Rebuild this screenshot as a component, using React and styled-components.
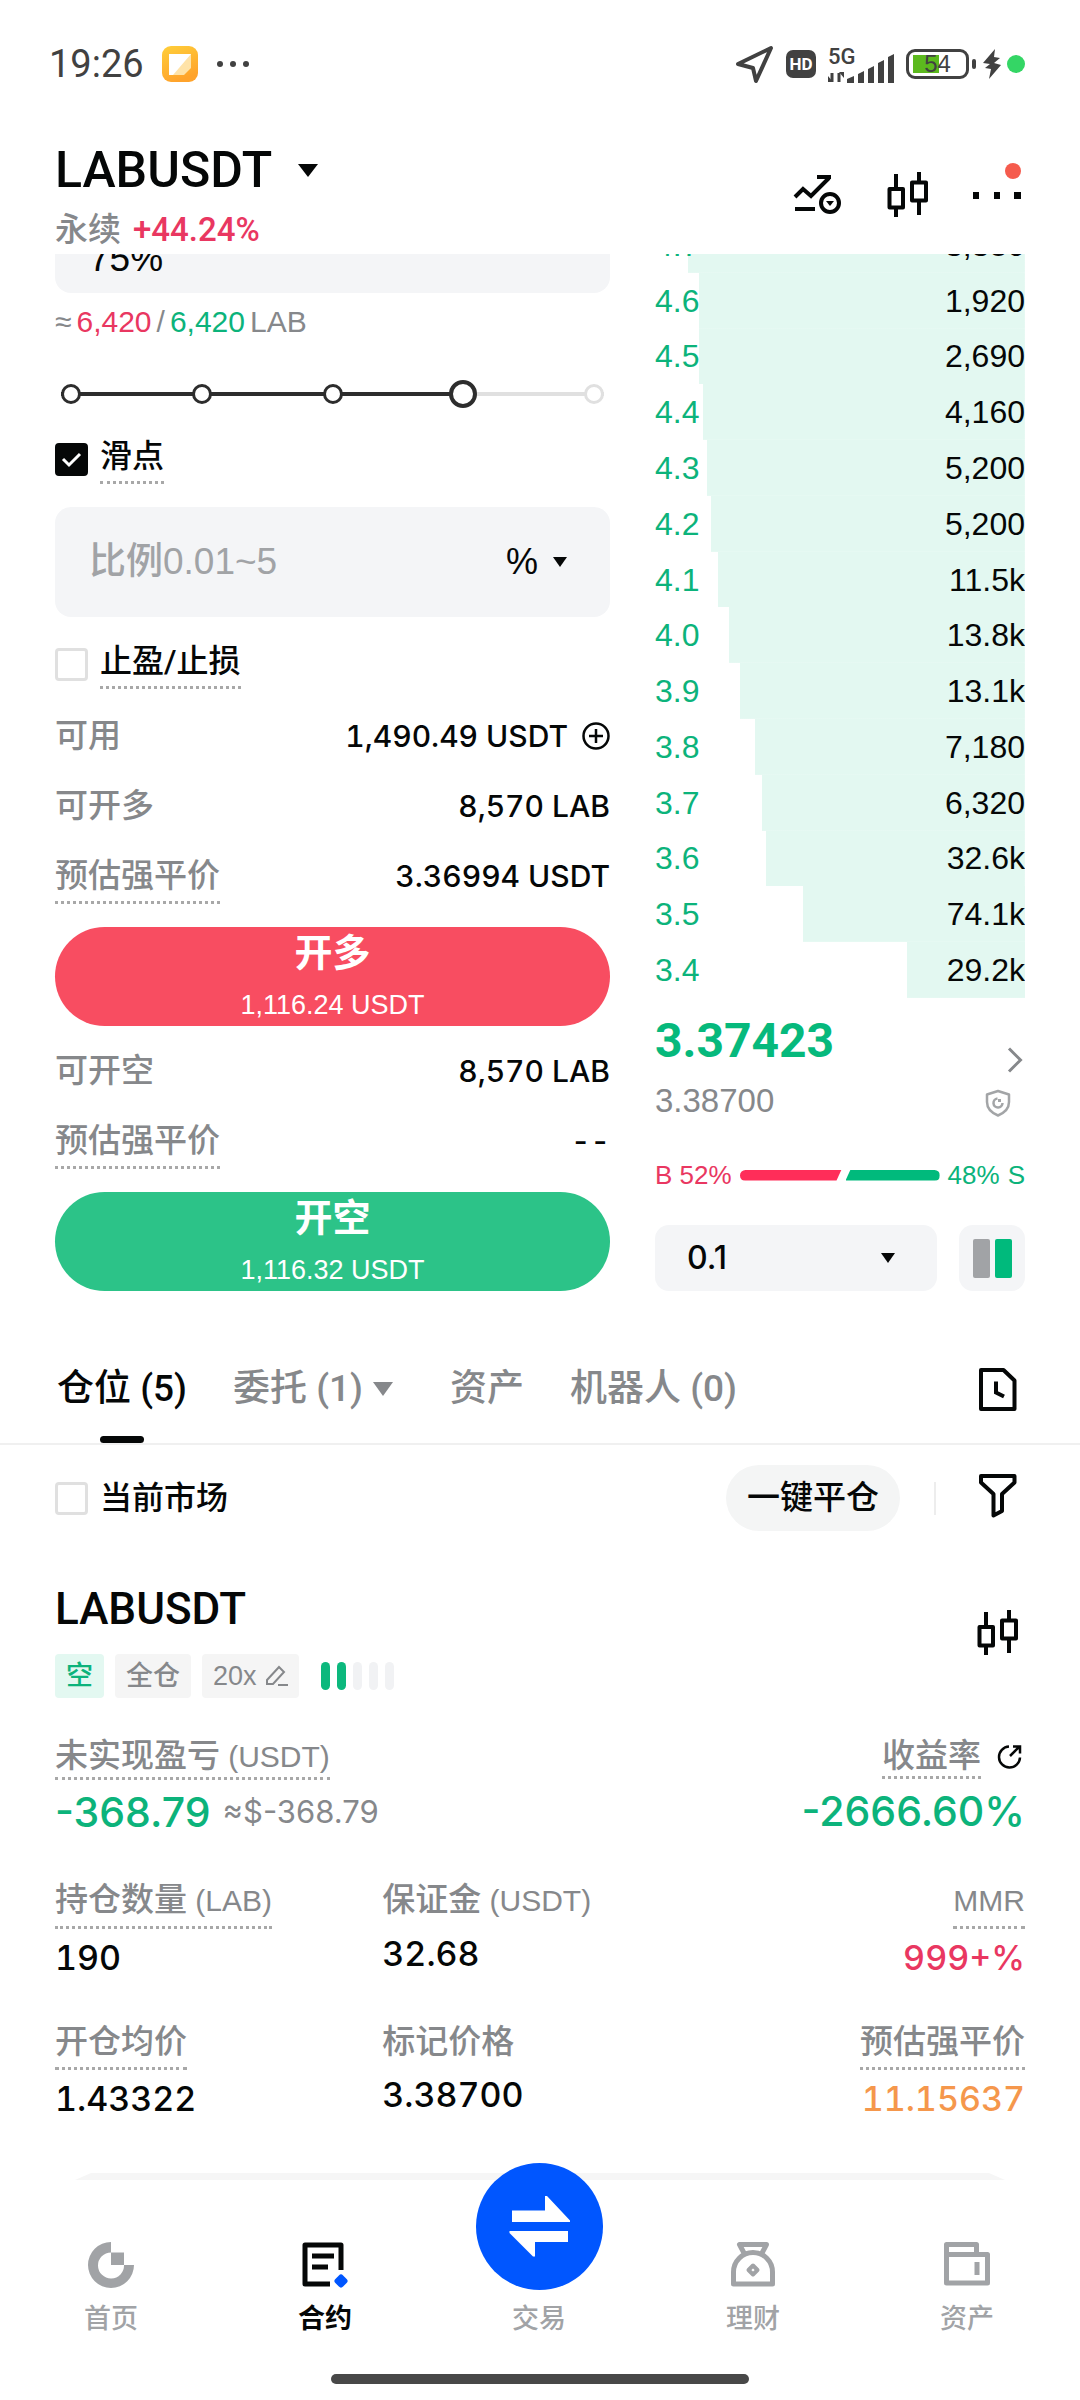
import React, { useState } from 'react'
import styled, { createGlobalStyle, css } from 'styled-components'

const color = {
  ink: '#050707',
  grey: '#86888b',
  mute: '#a1a3a6',
  green: '#0cb37b',
  greenSolid: '#2cc388',
  greenTint: '#e3f8f1',
  pink: '#e93761',
  red: '#f84d61',
  orange: '#f5974c',
  field: '#f4f5f7',
  blue: '#0056ff',
  status: '#414141'
}

const regular = '"Liberation Sans", "Noto Sans CJK SC", sans-serif'
const medium = 'Roboto, "Noto Sans CJK SC", sans-serif'
const figures = 'Inter, "Noto Sans CJK SC", sans-serif'

const GlobalStyle = createGlobalStyle`
  *, *::before, *::after {
    box-sizing: border-box;
  }

  body {
    margin: 0;
    background: #fff;
    color: ${color.ink};
    font-family: ${regular};
    font-size: 32px;
  }

  button, input, select {
    margin: 0;
    padding: 0;
    border: 0;
    background: none;
    color: inherit;
    font: inherit;
  }

  svg {
    display: block;
    flex: none;
  }
`

const Page = styled.div`
  display: flex;
  flex-direction: column;
`

/* status bar */

const StatusBar = styled.div`
  display: flex;
  justify-content: space-between;
  align-items: center;
  height: 128px;
  padding: 0 55px 0 49px;
  color: ${color.status};
`

const StatusGroup = styled.div`
  display: flex;
  align-items: center;
  gap: ${props => props.$gap}px;
`

const Clock = styled.span`
  font-family: ${medium};
  font-size: 38px;
  line-height: 44px;
`

const HdBadge = styled.span`
  width: 30px;
  border-radius: 7px;
  background: ${color.status};
  color: #fff;
  font: 700 17px/28px ${medium};
  text-align: center;
`

const Battery = styled.span`
  width: 63px;
  height: 30px;
  border: 3px solid ${color.status};
  border-radius: 9px;
  background: linear-gradient(#5cb91e, #5cb91e) 4px center / 26px 18px no-repeat;
  font: 400 24px/24px ${regular};
  text-align: center;
`

const Power = styled.span`
  display: flex;
  align-items: center;
  gap: 3px;
`

const Charging = styled.span`
  display: flex;
  align-items: center;
  gap: 6px;
  margin-left: 4px;
`

const OnlineDot = styled.span`
  width: 18px;
  height: 18px;
  border-radius: 50%;
  background: #34d665;
`

/* pair header */

const Header = styled.header`
  display: flex;
  justify-content: space-between;
  align-items: center;
  padding: 12px 59px 4px 55px;
`

const PairButton = styled.button`
  display: flex;
  align-items: center;
  gap: 26px;
  font: 500 50px/60px ${medium};
`

const PairMeta = styled.p`
  display: flex;
  gap: 12px;
  margin: 10px 0 0;
  font: 500 33px/40px ${medium};
  color: ${color.grey};
`

const HeaderIcons = styled.div`
  display: flex;
  align-items: center;
  gap: 43px;
`

const IconButton = styled.button`
  position: relative;
  display: flex;
  padding-bottom: ${props => props.$lift || 0}px;
`

const NoticeDot = styled.span`
  position: absolute;
  right: 0;
  bottom: 20px;
  width: 16px;
  height: 16px;
  border-radius: 50%;
  background: #f55b4d;
`

/* trading area */

const Trade = styled.main`
  display: grid;
  grid-template-columns: minmax(0, 3fr) minmax(0, 2fr);
  gap: 45px;
  padding: 0 55px;
`

const Form = styled.form`
  display: flex;
  flex-direction: column;
`

/* lower part of a field that is scrolled under the header */
const ScrolledField = styled.div`
  display: flex;
  flex-direction: column;
  justify-content: flex-end;
  height: 39px;
  overflow: hidden;

  input {
    flex: none;
    width: 100%;
    height: 110px;
    padding: 42px 34px 0;
    border-radius: 16px;
    background: ${color.field};
    font-size: 37px;
    line-height: 44px;
  }
`

const Estimate = styled.p`
  display: flex;
  gap: 5px;
  margin: 9px 0 36px;
  font-size: 30px;
  line-height: 40px;
  color: ${color.grey};
`

const Tint = styled.span`
  color: ${props => props.$color};
`

const Slider = styled.div`
  position: relative;
  display: flex;
  justify-content: space-between;
  align-items: center;
  height: 32px;
  margin: 0 6px;
  background:
    linear-gradient(#2d2d2d, #2d2d2d) left center / 75% 4px no-repeat,
    linear-gradient(#e0e0e0, #e0e0e0) center / 100% 4px no-repeat;

  input {
    position: absolute;
    inset: 0;
    width: 100%;
    opacity: 0;
  }
`

const Mark = styled.span`
  width: 20px;
  height: 20px;
  border: 3px solid ${props => (props.$reached ? '#2d2d2d' : '#e0e0e0')};
  border-radius: 50%;
  background: #fff;

  ${props => props.$current && css`
    width: 28px;
    height: 28px;
    margin: 0 -4px;
    border-width: 4px;
  `}
`

const CheckRow = styled.label`
  display: flex;
  align-items: center;
  gap: 12px;
  margin-top: ${props => props.$top || 0}px;
  font: 500 32px/44px ${medium};

  input {
    appearance: none;
    width: 33px;
    height: 33px;
    border: 3px solid #e0e0e0;
    border-radius: 4px;
    background: #fff;
  }

  input:checked {
    border-color: ${color.ink};
    background: ${color.ink} url("data:image/svg+xml,%3Csvg xmlns='http://www.w3.org/2000/svg' viewBox='0 0 27 27'%3E%3Cpath d='M5 13l6 6L22 8' fill='none' stroke='white' stroke-width='3'/%3E%3C/svg%3E") center / 27px no-repeat;
  }
`

const Dotted = styled.span`
  padding-bottom: 3px;
  border-bottom: 3px dotted #a8a8a8;
`

const Field = styled.div`
  display: flex;
  align-items: center;
  height: 110px;
  margin-top: 23px;
  padding: 0 43px 0 34px;
  border-radius: 16px;
  background: ${color.field};

  input {
    flex: 1;
    min-width: 0;
    font-size: 37px;
    line-height: 50px;
  }

  input::placeholder {
    color: ${color.mute};
    font-weight: 500;
  }
`

const Picker = styled.select`
  flex: ${props => (props.$fill ? 1 : 'none')};
  appearance: none;
  margin-right: 14px;
  font: 500 ${props => (props.$fill ? 32 : 36)}px/44px ${props => (props.$fill ? figures : regular)};
`

const InfoList = styled.dl`
  margin: ${props => props.$top}px 0 16px;
`

const InfoRow = styled.div`
  display: flex;
  justify-content: space-between;
  align-items: center;
  height: 70px;

  dt {
    font: 500 33px/44px ${medium};
    color: ${color.grey};
  }

  dt > span {
    display: block;
    padding-top: 6px;
  }

  dd {
    display: flex;
    align-items: center;
    gap: 14px;
    margin: 0;
    font: 500 30px/44px ${figures};
    font-variant-numeric: tabular-nums;
  }
`

const OrderButton = styled.button`
  display: flex;
  flex-direction: column;
  align-items: center;
  justify-content: center;
  gap: 12px;
  height: 99px;
  border-radius: 50px;
  background: ${props => props.$color};
  color: #fff;

  strong {
    font: 700 38px/44px ${medium};
  }

  small {
    font: 400 27px/36px ${regular};
  }
`

/* order book */

const Book = styled.section`
  display: flex;
  flex-direction: column;
  min-width: 0;
`

const BookRows = styled.div`
  display: flex;
  flex: 1 1 0px;
  flex-direction: column;
  justify-content: flex-end;
  min-height: 0;
  overflow: hidden;
`

const BookTable = styled.table`
  flex: none;
  width: 100%;
  height: 781px;
  border-collapse: collapse;
  font-size: 32px;
  line-height: 36px;

  td {
    padding: 0;
  }

  td:first-child {
    color: ${color.green};
  }

  td:last-child {
    text-align: right;
  }
`

const DepthRow = styled.tr`
  background: linear-gradient(${color.greenTint}, ${color.greenTint}) right / 0 100% no-repeat;
`

const PriceBlock = styled.div`
  display: flex;
  justify-content: space-between;
  align-items: center;
  margin-top: 13px;
`

const LastPrice = styled.div`
  font: 700 48px/60px ${medium};
  color: #06b97c;
`

const MarkPrice = styled.div`
  margin-top: 10px;
  font-size: 33px;
  line-height: 40px;
  color: ${color.grey};
`

const PriceIcons = styled.div`
  display: flex;
  flex-direction: column;
  align-items: center;
  gap: 16px;
  padding-top: 32px;

  svg:first-child {
    align-self: flex-end;
  }

  svg:last-child {
    margin-right: 14px;
  }
`

const Ratio = styled.div`
  display: flex;
  align-items: center;
  gap: 8px;
  margin: 38px 0 34px;
  font-size: 26px;
  line-height: 32px;
`

const RatioBar = styled.div`
  display: flex;
  flex: 1;
  gap: 4px;
  height: 11px;
  overflow: hidden;
  border-radius: 6px;
`

const BuyShare = styled.div`
  flex: 52;
  background: #ff2d59;
  clip-path: polygon(0 0, 100% 0, calc(100% - 5px) 100%, 0 100%);
`

const SellShare = styled.div`
  flex: 48;
  background: #00ba7c;
  clip-path: polygon(5px 0, 100% 0, 100% 100%, 0 100%);
`

const BookControls = styled.div`
  display: flex;
  gap: 22px;
  height: 66px;
`

const StepBox = styled.div`
  display: flex;
  flex: 1;
  align-items: center;
  padding: 0 42px 0 32px;
  border-radius: 14px;
  background: ${color.field};
`

const LayoutButton = styled.button`
  display: flex;
  align-items: center;
  justify-content: center;
  gap: 5px;
  width: 66px;
  border-radius: 14px;
  background: ${color.field};
`

const LayoutBar = styled.span`
  width: 17px;
  height: 39px;
  border-radius: 2px;
  background: ${props => props.$color};
`

/* positions */

const TabBar = styled.div`
  display: flex;
  justify-content: space-between;
  align-items: flex-start;
  margin-top: 70px;
  padding: 0 63px 0 57px;
  border-bottom: 2px solid #f0f0f0;
`

const Tabs = styled.div`
  display: flex;
  gap: 46px;
`

const Tab = styled.button`
  display: flex;
  flex-direction: column;
  align-items: center;
  gap: 19px;
  color: ${props => (props.$active ? color.ink : color.grey)};

  &::after {
    content: '';
    width: 44px;
    height: 7px;
    border-radius: 4px;
    background: ${props => (props.$active ? color.ink : 'transparent')};
  }
`

const TabLabel = styled.span`
  display: flex;
  align-items: center;
  gap: 10px;
  padding-right: ${props => (props.$menu ? 11 : 0)}px;
  font: 500 37px/56px ${medium};
`

const TabIcon = styled(IconButton)`
  padding-top: 6px;
`

const Toolbar = styled.div`
  display: flex;
  justify-content: space-between;
  align-items: center;
  height: 106px;
  padding: 0 63px 0 55px;
`

const ToolbarActions = styled.div`
  display: flex;
  align-items: center;
`

const CloseAll = styled.button`
  height: 66px;
  padding: 0 21px;
  border-radius: 33px;
  background: #f4f5f5;
  font: 500 33px/44px ${medium};
`

const Divider = styled.span`
  width: 2px;
  height: 33px;
  margin: 0 42px 0 34px;
  background: #ededed;
`

const Position = styled.section`
  padding: 30px 55px 40px;
`

const PositionHead = styled.div`
  display: flex;
  justify-content: space-between;
  align-items: center;
  padding-right: 5px;
`

const PositionName = styled.h2`
  margin: 0 0 17px;
  font: 500 44px/56px ${medium};
`

const Badges = styled.div`
  display: flex;
  align-items: center;
  gap: 11px;
`

const Badge = styled.span`
  display: flex;
  align-items: center;
  gap: 8px;
  padding: 0 11px;
  border-radius: 4px;
  background: ${props => (props.$short ? color.greenTint : '#f5f5f5')};
  color: ${props => (props.$short ? color.green : color.grey)};
  font: 500 27px/44px ${regular};
`

const Level = styled.span`
  display: flex;
  gap: 7px;
  margin-left: 11px;
`

const LevelBar = styled.i`
  width: 9px;
  height: 28px;
  border-radius: 5px;
  background: ${props => (props.$on ? '#0cb87d' : '#f1f2f4')};
`

const Summary = styled.div`
  display: flex;
  justify-content: space-between;
  margin: 38px 0;
`

const SummaryCell = styled.div`
  display: flex;
  flex-direction: column;
  align-items: ${props => (props.$end ? 'flex-end' : 'flex-start')};
`

const SummaryLabel = styled.div`
  display: flex;
  align-items: flex-start;
  gap: 16px;
  font: 500 33px/40px ${medium};
  color: ${color.grey};

  ${Dotted} {
    padding-bottom: 0;
  }

  svg {
    margin: 8px 3px 0 0;
  }
`

const Unit = styled.span`
  font-family: ${regular};
  font-size: 30px;
  font-weight: 400;
`

const Pnl = styled.div`
  display: flex;
  align-items: center;
  gap: 12px;
  margin-top: 4px;
  font: 500 41px/56px ${figures};
  color: ${color.green};

  small {
    font: 400 31px/56px ${figures};
    color: ${color.grey};
  }
`

const Stats = styled.dl`
  display: grid;
  grid-template-columns: repeat(3, 1fr);
  gap: 38px 12px;
  margin: 0;
`

const Stat = styled.div`
  display: flex;
  flex-direction: column;
  align-items: ${props => (props.$end ? 'flex-end' : 'flex-start')};

  dt {
    display: flex;
    padding-bottom: ${props => (props.$plain ? 2 : 0)}px;
    font: 500 33px/44px ${medium};
    color: ${color.grey};
  }

  dd {
    margin: 5px 0 0;
    font: 500 34px/48px ${figures};
    font-variant-numeric: tabular-nums;
    color: ${props => props.$color || color.ink};
  }
`

/* bottom navigation */

const BottomNav = styled.nav`
  position: relative;
  display: grid;
  grid-template-columns: repeat(5, 1fr);
  align-items: end;
  padding: 0 6px 0 4px;

  &::before {
    content: '';
    position: absolute;
    top: 10px;
    left: 75px;
    right: 75px;
    height: 7px;
    background: #f6f6f6;
    clip-path: polygon(16px 0, calc(100% - 16px) 0, 100% 100%, 0 100%);
  }
`

const NavLink = styled.a`
  position: relative;
  display: flex;
  flex-direction: column;
  align-items: center;
  gap: 11px;
  color: ${props => (props.$active ? color.ink : color.mute)};
  font: ${props => (props.$active ? 700 : 500)} 27px/36px ${medium};
  text-decoration: none;
`

const HomeIndicator = styled.div`
  width: 418px;
  height: 10px;
  margin: 37px auto 16px;
  border-radius: 5px;
  background: #484848;
`

/* icons */

const Caret = ({ width = 14, height = 10 }) => (
  <svg width={width} height={height} viewBox="0 0 14 10" preserveAspectRatio="none" fill="currentColor">
    <path d="M0 0h14L7 10z" />
  </svg>
)

const NoteAppIcon = () => (
  <svg width="36" height="36" viewBox="0 0 36 36">
    <defs>
      <linearGradient id="note" x1="0" y1="0" x2="0.4" y2="1">
        <stop offset="0" stopColor="#ffcf3a" />
        <stop offset="1" stopColor="#ffa32b" />
      </linearGradient>
    </defs>
    <rect width="36" height="36" rx="9" fill="url(#note)" />
    <path d="M7 8h22v14l-7 7H7z" fill="#ffe3a8" />
    <path d="M7 8h22L11 29H7z" fill="#fff" />
  </svg>
)

const StatusDots = () => (
  <svg width="34" height="6" viewBox="0 0 34 6" fill="currentColor">
    <circle cx="4" cy="3" r="3" />
    <circle cx="17" cy="3" r="3" />
    <circle cx="30" cy="3" r="3" />
  </svg>
)

const LocationIcon = () => (
  <svg width="39" height="40" viewBox="0 0 39 40" fill="none" stroke="currentColor" strokeWidth="4" strokeLinejoin="round">
    <path d="M3 20 36 4 21 37l-3-13z" />
  </svg>
)

const SignalIcon = () => (
  <svg width="66" height="44" viewBox="0 -7 66 44" fill="currentColor">
    <text x="0" y="15" fontFamily="Roboto, sans-serif" fontSize="22" fontWeight="500">5G</text>
    <path d="M4 24v9M11 24v9" stroke="currentColor" strokeWidth="3" />
    <path d="M0 27l5 6h-5zM16 29l-5-6h5z" />
    <path d="M19 34v-4l7-3v7zM30 34V25l6-3v12zM40 34V20l6-3v17zM50 34V14l6-3v23zM60 34V8l6-3v29z" />
  </svg>
)

const BoltIcon = () => (
  <svg width="18" height="30" viewBox="0 0 18 30" fill="currentColor">
    <path d="M12 0 0 14l7 1-5 4 6 1-2 10L18 16l-7-2 6-5-6-1z" />
  </svg>
)

const ChartIcon = () => (
  <svg width="50" height="42" viewBox="0 0 50 42" fill="none" stroke="currentColor" strokeWidth="4">
    <path d="M2 23 10 15l8 7L36 4M24 3H38M2 35h20" />
    <circle cx="37" cy="29" r="9" />
    <path d="M33 27h8l-4 5z" fill="currentColor" stroke="none" />
  </svg>
)

const CandlesIcon = () => (
  <svg width="44" height="48" viewBox="0 0 44 48" fill="none" stroke="currentColor" strokeWidth="4" strokeLinejoin="round">
    <path d="M3.500 18h13.500v18.500H3.500zM10 3v14M10 38v8M26 11.500h14v18H26zM33 1v9M33 31v13" />
  </svg>
)

const MoreIcon = () => (
  <svg width="48" height="7" viewBox="0 0 48 7" fill="currentColor">
    <path d="M0 0h6v7H0zM21 0h6v7h-6zM41 0h7v7h-7z" />
  </svg>
)

const PlusCircle = () => (
  <svg width="28" height="28" viewBox="0 0 28 28" fill="none" stroke="currentColor" strokeWidth="2.500">
    <circle cx="14" cy="14" r="12.500" />
    <path d="M14 7v14M7 14h14" />
  </svg>
)

const ChevronIcon = () => (
  <svg width="18" height="26" viewBox="0 0 18 26" fill="none" stroke={color.grey} strokeWidth="3">
    <path d="M2 1.500 13.500 13 2 24.500" />
  </svg>
)

const ShieldIcon = () => (
  <svg width="26" height="28" viewBox="0 0 26 28" fill="none" stroke="#a3a5a7" strokeWidth="2.500">
    <path d="M13 2 24 5.500V13c0 7-5 11-11 13.500C7 24 2 20 2 13V5.500z" strokeLinejoin="round" />
    <path d="M12.500 9.500a4.500 4.500 0 1 0 5 4.500" />
    <path d="M13 10h3v3h-3z" fill="#a3a5a7" stroke="none" />
  </svg>
)

const HistoryIcon = () => (
  <svg width="39" height="45" viewBox="0 0 39 45" fill="none" stroke="currentColor" strokeWidth="4" strokeLinejoin="round">
    <path d="M3 3h22.500L36.500 13.500V42H3z" />
    <path d="M18 14.500v11l8 4" strokeLinejoin="miter" />
  </svg>
)

const FilterIcon = () => (
  <svg width="39" height="45" viewBox="0 0 39 45" fill="none" stroke="currentColor" strokeWidth="4" strokeLinejoin="round">
    <path d="M3 3h33.500v6.500L24 21v17l-8.500 4.500V21L3 9.500z" />
  </svg>
)

const EditIcon = () => (
  <svg width="23" height="22" viewBox="0 0 23 22" fill="none" stroke="currentColor" strokeWidth="2">
    <path d="M2 15 14 2l5 5L8 19H2zM13 20h10" />
  </svg>
)

const ShareIcon = () => (
  <svg width="25" height="25" viewBox="0 0 25 25" fill="none" stroke={color.ink} strokeWidth="2.500">
    <path d="M12 2.500a10.500 10.500 0 1 0 11 11M13 12 22 3M16 2.500h7v7" />
  </svg>
)

const HomeIcon = () => (
  <svg width="46" height="48" viewBox="0 0 46 48" fill="currentColor">
    <path d="M23 0a23 23 0 1 0 23 23H36A13 13 0 1 1 23 10.500z" />
    <path d="M23 10.500h13V23H23z" />
  </svg>
)

const ContractIcon = () => (
  <svg width="46" height="48" viewBox="0 0 46 48" fill="none" stroke="currentColor" strokeWidth="5">
    <path d="M39 28V3H3v39h25" strokeLinejoin="round" />
    <path d="M10 14h22M10 25h16" />
    <path d="M39 35.500l3.500 3.500-3.500 3.500-3.500-3.500z" fill={color.blue} stroke={color.blue} strokeWidth="6" strokeLinejoin="round" />
  </svg>
)

const SwapIcon = () => (
  <svg width="127" height="127" viewBox="0 0 127 127">
    <circle cx="63.500" cy="63.500" r="63.500" fill={color.blue} />
    <path d="M36 47.500h33V33h2l23 24.500v1.500H36zM33.500 68H92v11H59v14.500h-2L33.500 70z" fill="#fff" />
  </svg>
)

const BagIcon = () => (
  <svg width="44" height="48" viewBox="0 0 44 48" fill="none" stroke="currentColor" strokeWidth="5" strokeLinejoin="round">
    <path d="M13.500 12 8.500 2.500h27L30.500 12" />
    <path d="M2.500 42V30a19.500 19.500 0 0 1 39 0V42z" />
    <path d="M22 23.500l4.500 4.500-4.500 4.500-4.500-4.500z" strokeWidth="4" />
  </svg>
)

const WalletIcon = () => (
  <svg width="46" height="48" viewBox="0 0 46 48" fill="none" stroke="currentColor" strokeWidth="5" strokeLinejoin="round">
    <path d="M2.500 12.500h41V41h-41zM2.500 12.500v-10h30v10M33 20v13" />
  </svg>
)

const asks = [
  { price: '4.7', size: '3,380', depth: 91 },
  { price: '4.6', size: '1,920', depth: 88 },
  { price: '4.5', size: '2,690', depth: 88 },
  { price: '4.4', size: '4,160', depth: 87 },
  { price: '4.3', size: '5,200', depth: 86 },
  { price: '4.2', size: '5,200', depth: 85 },
  { price: '4.1', size: '11.5k', depth: 83 },
  { price: '4.0', size: '13.8k', depth: 80 },
  { price: '3.9', size: '13.1k', depth: 77 },
  { price: '3.8', size: '7,180', depth: 73 },
  { price: '3.7', size: '6,320', depth: 71 },
  { price: '3.6', size: '32.6k', depth: 70 },
  { price: '3.5', size: '74.1k', depth: 60 },
  { price: '3.4', size: '29.2k', depth: 32 }
]

const tabs = [
  { id: 'positions', label: '仓位 (5)' },
  { id: 'orders', label: '委托 (1)', menu: true },
  { id: 'assets', label: '资产' },
  { id: 'bots', label: '机器人 (0)' }
]

const stats = [
  { label: '持仓数量', unit: '(LAB)', value: '190' },
  { label: '保证金', unit: '(USDT)', value: '32.68', plain: true },
  { unit: 'MMR', value: '999+%', end: true, tone: color.pink },
  { label: '开仓均价', value: '1.43322' },
  { label: '标记价格', value: '3.38700', plain: true },
  { label: '预估强平价', value: '11.15637', end: true, tone: color.orange }
]

const navItems = [
  { label: '首页', icon: <HomeIcon /> },
  { label: '合约', icon: <ContractIcon />, active: true },
  { label: '交易', icon: <SwapIcon /> },
  { label: '理财', icon: <BagIcon /> },
  { label: '资产', icon: <WalletIcon /> }
]

const OrderForm = () => {
  const [percent, setPercent] = useState(75)

  return (
    <Form onSubmit={e => e.preventDefault()}>
      <ScrolledField>
        <input aria-label="数量" value={`${percent}%`} readOnly />
      </ScrolledField>
      <Estimate>
        <span>≈</span>
        <Tint $color={color.pink}>6,420</Tint>
        <span>/</span>
        <Tint $color={color.green}>6,420</Tint>
        <span>LAB</span>
      </Estimate>
      <Slider>
        {[0, 25, 50, 75, 100].map(step => (
          <Mark key={step} $reached={step <= percent} $current={step === percent} />
        ))}
        <input type="range" aria-label="仓位比例" step="25" value={percent}
               onChange={e => setPercent(Number(e.target.value))} />
      </Slider>
      <CheckRow $top={24}>
        <input type="checkbox" defaultChecked />
        <Dotted>滑点</Dotted>
      </CheckRow>
      <Field>
        <input aria-label="滑点比例" placeholder="比例0.01~5" />
        <Picker aria-label="单位">
          <option>%</option>
        </Picker>
        <Caret />
      </Field>
      <CheckRow $top={22}>
        <input type="checkbox" />
        <Dotted>止盈/止损</Dotted>
      </CheckRow>
      <InfoList $top={12}>
        <InfoRow>
          <dt>可用</dt>
          <dd>1,490.49 USDT <PlusCircle /></dd>
        </InfoRow>
        <InfoRow>
          <dt>可开多</dt>
          <dd>8,570 LAB</dd>
        </InfoRow>
        <InfoRow>
          <dt><Dotted>预估强平价</Dotted></dt>
          <dd>3.36994 USDT</dd>
        </InfoRow>
      </InfoList>
      <OrderButton type="button" $color={color.red}>
        <strong>开多</strong>
        <small>1,116.24 USDT</small>
      </OrderButton>
      <InfoList $top={10}>
        <InfoRow>
          <dt>可开空</dt>
          <dd>8,570 LAB</dd>
        </InfoRow>
        <InfoRow>
          <dt><Dotted>预估强平价</Dotted></dt>
          <dd>--</dd>
        </InfoRow>
      </InfoList>
      <OrderButton type="button" $color={color.greenSolid}>
        <strong>开空</strong>
        <small>1,116.32 USDT</small>
      </OrderButton>
    </Form>
  )
}

const OrderBook = () => (
  <Book>
    <BookRows>
      <BookTable>
        <tbody>
          {asks.map(row => (
            <DepthRow key={row.price} style={{ backgroundSize: `${row.depth}% 100%` }}>
              <td>{row.price}</td>
              <td>{row.size}</td>
            </DepthRow>
          ))}
        </tbody>
      </BookTable>
    </BookRows>
    <PriceBlock>
      <div>
        <LastPrice>3.37423</LastPrice>
        <MarkPrice>3.38700</MarkPrice>
      </div>
      <PriceIcons>
        <ChevronIcon />
        <ShieldIcon />
      </PriceIcons>
    </PriceBlock>
    <Ratio>
      <Tint $color={color.pink}>B 52%</Tint>
      <RatioBar>
        <BuyShare />
        <SellShare />
      </RatioBar>
      <Tint $color={color.green}>48%</Tint>
      <Tint $color={color.green}>S</Tint>
    </Ratio>
    <BookControls>
      <StepBox>
        <Picker aria-label="价格精度" $fill>
          <option>0.1</option>
        </Picker>
        <Caret />
      </StepBox>
      <LayoutButton type="button" aria-label="盘口布局">
        <LayoutBar $color={color.mute} />
        <LayoutBar $color="#00ba7c" />
      </LayoutButton>
    </BookControls>
  </Book>
)

const Positions = () => {
  const [tab, setTab] = useState('positions')

  return (
    <>
      <TabBar>
        <Tabs role="tablist">
          {tabs.map(item => (
            <Tab key={item.id}
                 role="tab"
                 aria-selected={item.id === tab}
                 $active={item.id === tab}
                 onClick={() => setTab(item.id)}>
              <TabLabel $menu={item.menu}>
                {item.label}
                {item.menu && <Caret width={20} height={14} />}
              </TabLabel>
            </Tab>
          ))}
        </Tabs>
        <TabIcon aria-label="历史记录"><HistoryIcon /></TabIcon>
      </TabBar>
      <Toolbar>
        <CheckRow>
          <input type="checkbox" />
          <span>当前市场</span>
        </CheckRow>
        <ToolbarActions>
          <CloseAll>一键平仓</CloseAll>
          <Divider />
          <IconButton aria-label="筛选" $lift={6}><FilterIcon /></IconButton>
        </ToolbarActions>
      </Toolbar>
      <Position>
        <PositionHead>
          <div>
            <PositionName>LABUSDT</PositionName>
            <Badges>
              <Badge $short>空</Badge>
              <Badge>全仓</Badge>
              <Badge>20x <EditIcon /></Badge>
              <Level>
                {[1, 2, 3, 4, 5].map(n => <LevelBar key={n} $on={n <= 2} />)}
              </Level>
            </Badges>
          </div>
          <IconButton aria-label="K线" $lift={14}><CandlesIcon /></IconButton>
        </PositionHead>
        <Summary>
          <SummaryCell>
            <SummaryLabel>
              <Dotted>未实现盈亏 <Unit>(USDT)</Unit></Dotted>
            </SummaryLabel>
            <Pnl>-368.79 <small>≈$-368.79</small></Pnl>
          </SummaryCell>
          <SummaryCell $end>
            <SummaryLabel>
              <Dotted>收益率</Dotted>
              <ShareIcon />
            </SummaryLabel>
            <Pnl>-2666.60%</Pnl>
          </SummaryCell>
        </Summary>
        <Stats>
          {stats.map(({ label, unit, value, plain, end, tone }) => {
            const Label = plain ? 'span' : Dotted
            return (
              <Stat key={value} $plain={plain} $end={end} $color={tone}>
                <dt>
                  <Label>{label}{label && unit && ' '}{unit && <Unit>{unit}</Unit>}</Label>
                </dt>
                <dd>{value}</dd>
              </Stat>
            )
          })}
        </Stats>
      </Position>
    </>
  )
}

const App = () => (
  <Page>
    <GlobalStyle />
    <StatusBar>
      <StatusGroup $gap={18}>
        <Clock>19:26</Clock>
        <NoteAppIcon />
        <StatusDots />
      </StatusGroup>
      <StatusGroup $gap={12}>
        <LocationIcon />
        <HdBadge>HD</HdBadge>
        <SignalIcon />
        <Power>
          <Battery>54</Battery>
          <svg width="4" height="10" viewBox="0 0 4 10"><rect width="4" height="10" rx="2" fill="currentColor" /></svg>
          <Charging>
            <BoltIcon />
            <OnlineDot />
          </Charging>
        </Power>
      </StatusGroup>
    </StatusBar>
    <Header>
      <div>
        <PairButton>LABUSDT <Caret width={20} height={13} /></PairButton>
        <PairMeta>永续 <Tint $color={color.pink}>+44.24%</Tint></PairMeta>
      </div>
      <HeaderIcons>
        <IconButton aria-label="指标"><ChartIcon /></IconButton>
        <IconButton aria-label="K线"><CandlesIcon /></IconButton>
        <IconButton aria-label="更多">
          <MoreIcon />
          <NoticeDot />
        </IconButton>
      </HeaderIcons>
    </Header>
    <Trade>
      <OrderForm />
      <OrderBook />
    </Trade>
    <Positions />
    <BottomNav>
      {navItems.map((item, index) => (
        <NavLink key={index} href="#" $active={item.active}>
          {item.icon}
          {item.label}
        </NavLink>
      ))}
    </BottomNav>
    <HomeIndicator />
  </Page>
)

export default App
